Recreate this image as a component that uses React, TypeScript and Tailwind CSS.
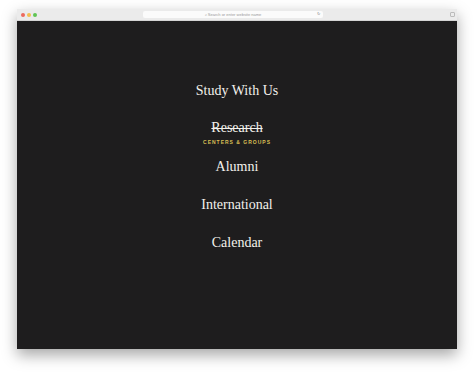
import React from "react";

export default function App() {
  const serif = { fontFamily: '"Liberation Serif", "DejaVu Serif", serif' };
  return (
    <div className="w-[474px] h-[373px] bg-white overflow-hidden pt-[9px] pl-[17px]">
      <div className="w-[440px] h-[340px] flex flex-col shadow-[0_6px_14px_rgba(0,0,0,0.35)]">
        <div className="h-[12px] bg-[#ebebeb] border-b border-[#d4d4d4] flex items-center relative">
          <div className="flex items-center gap-[2px] pl-[4px]">
            <div className="w-[4px] h-[4px] rounded-full bg-[#ec6a5e]" />
            <div className="w-[4px] h-[4px] rounded-full bg-[#f4bf4f]" />
            <div className="w-[4px] h-[4px] rounded-full bg-[#61c554]" />
          </div>
          <div className="absolute left-[126px] top-[2px] w-[180px] h-[7px] bg-[#fbfbfb] rounded-[2px] flex items-center justify-center">
            <span className="text-[4px] leading-none text-[#9a9a9a]" style={{ fontFamily: '"Liberation Sans", sans-serif' }}>⌕ Search or enter website name</span>
            <span className="absolute right-[3px] top-[1px] text-[4px] leading-none text-[#888]">↻</span>
          </div>
          <div className="absolute right-[2px] top-[3px] w-[5px] h-[5px] border border-[#bbb] rounded-[1px]" />
        </div>
        <div className="flex-1 bg-[#1e1d1e] flex flex-col items-center pt-[59px]" style={serif}>
          <div className="text-[14px] leading-[22px] text-[#f3f1ec]">Study With Us</div>
          <div className="mt-[15px] text-[14px] leading-[22px] text-[#f3f1ec] line-through decoration-[1px]">Research</div>
          <div className="text-[5px] leading-[6px] tracking-[1px] text-[#d8bf55] font-bold" style={{ fontFamily: '"Liberation Sans", sans-serif' }}>CENTERS &amp; GROUPS</div>
          <div className="mt-[11px] text-[14px] leading-[22px] text-[#f3f1ec]">Alumni</div>
          <div className="mt-[16px] text-[14px] leading-[22px] text-[#f3f1ec]">International</div>
          <div className="mt-[16px] text-[14px] leading-[22px] text-[#f3f1ec]">Calendar</div>
        </div>
      </div>
    </div>
  );
}
